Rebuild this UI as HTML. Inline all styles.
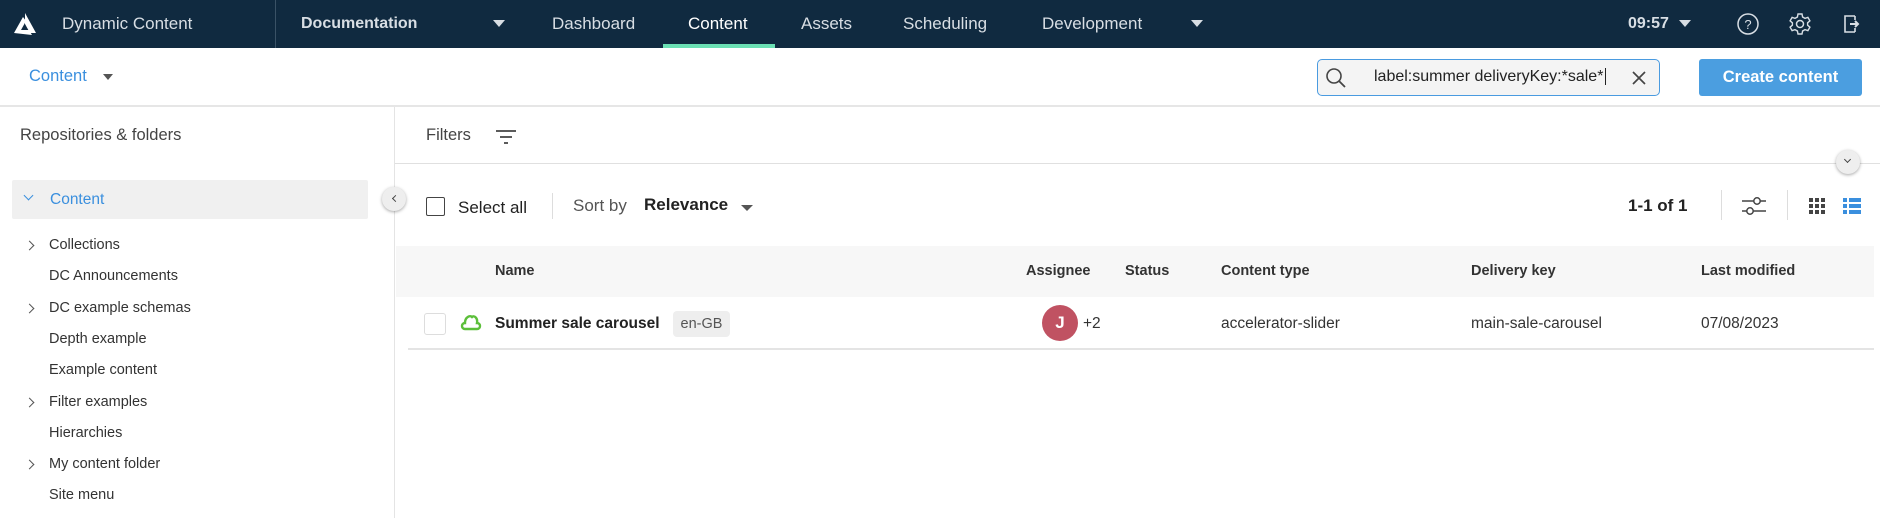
<!DOCTYPE html>
<html><head><meta charset="utf-8"><style>
*{margin:0;padding:0;box-sizing:border-box}
body{width:1880px;height:518px;overflow:hidden;background:#fff;font-family:"Liberation Sans",sans-serif;color:#333;position:relative}
.a{position:absolute;white-space:nowrap}
.nav{position:absolute;left:0;top:0;width:1880px;height:48px;background:#102a40}
.nt{position:absolute;top:14px;font-size:17px;color:#d8dee4}
.tri{position:absolute;width:0;height:0;border-left:6px solid transparent;border-right:6px solid transparent;border-top:7px solid #d8dee4}
.tree{position:absolute;left:49px;font-size:14.5px;color:#333}
.chev{position:absolute;left:26px;width:7px;height:7px;border-right:1.5px solid #555;border-top:1.5px solid #555;transform:rotate(45deg)}
.th{position:absolute;top:263px;font-size:14.5px;font-weight:bold;color:#333}
.td{position:absolute;top:315px;font-size:15.5px;color:#333}
</style></head><body>
<div class="nav">
 <svg class="a" style="left:13px;top:12px" width="24" height="24" viewBox="0 0 24 24"><path d="M12 1 L23 21 L17 21 L12 12 Z" fill="#fff"/><path d="M10 5 L1 21 L19 23 L16 18 L8 18 L13 9 Z" fill="#fff"/></svg>
 <div class="nt" style="left:62px">Dynamic Content</div>
 <div class="a" style="left:275px;top:0;width:1px;height:48px;background:#3a5266"></div>
 <div class="nt" style="left:301px;top:15px;font-weight:bold;font-size:16px">Documentation</div>
 <div class="tri" style="left:493px;top:20px"></div>
 <div class="nt" style="left:552px">Dashboard</div>
 <div class="nt" style="left:688px;color:#fff">Content</div>
 <div class="a" style="left:663px;top:44px;width:112px;height:4px;background:#6be0b4"></div>
 <div class="nt" style="left:801px">Assets</div>
 <div class="nt" style="left:903px">Scheduling</div>
 <div class="nt" style="left:1042px">Development</div>
 <div class="tri" style="left:1191px;top:20px"></div>
 <div class="nt" style="left:1628px;top:15px;font-weight:bold;font-size:16px">09:57</div>
 <div class="tri" style="left:1679px;top:20px"></div>
 <svg class="a" style="left:1736px;top:12px" width="24" height="24" viewBox="0 0 24 24"><circle cx="12" cy="12" r="10" fill="none" stroke="#d8dee4" stroke-width="1.5"/><text x="12" y="17" text-anchor="middle" font-size="13" fill="#d8dee4" font-family="Liberation Sans">?</text></svg>
 <svg class="a" style="left:1788px;top:12px" width="24" height="24" viewBox="0 0 24 24"><circle cx="12" cy="12" r="3.5" fill="none" stroke="#d8dee4" stroke-width="1.5"/><path d="M10 2h4l.6 3 2.4 1.4 2.9-1 2 3.4-2.3 2v2.4l2.3 2-2 3.4-2.9-1-2.4 1.4-.6 3h-4l-.6-3-2.4-1.4-2.9 1-2-3.4 2.3-2V10.8l-2.3-2 2-3.4 2.9 1L9.4 5z" fill="none" stroke="#d8dee4" stroke-width="1.4"/></svg>
 <svg class="a" style="left:1840px;top:12px" width="24" height="24" viewBox="0 0 24 24"><path d="M15 4H5v16h10M15 4v4M15 20v-4" fill="none" stroke="#d8dee4" stroke-width="1.6"/><path d="M10 12h8M15 9l3 3-3 3" fill="none" stroke="#d8dee4" stroke-width="2"/></svg>
</div>
<div class="a" style="left:29px;top:67px;font-size:16.5px;color:#3a8fde">Content</div>
<div class="tri" style="left:103px;top:74px;border-top-color:#555;border-width:6px 5px 0 5px"></div>
<div class="a" style="left:1317px;top:59px;width:343px;height:37px;border:1.5px solid #4a9be0;border-radius:5px;background:#f4f4f4"></div>
<svg class="a" style="left:1324px;top:66px" width="24" height="24" viewBox="0 0 24 24"><circle cx="10" cy="10" r="7" fill="none" stroke="#444" stroke-width="1.6"/><path d="M15 15l6 6" stroke="#444" stroke-width="1.8"/></svg>
<div class="a" style="left:1374px;top:68px;font-size:16px;color:#222">label:summer deliveryKey:*sale*<span style="border-left:1.5px solid #222;margin-left:2px"> </span></div>
<svg class="a" style="left:1630px;top:69px" width="18" height="18" viewBox="0 0 18 18"><path d="M3 3l12 12M15 3L3 15" stroke="#444" stroke-width="1.7"/></svg>
<div class="a" style="left:1699px;top:59px;width:163px;height:37px;background:#4b9ee0;border-radius:3px;color:#fff;font-size:16.5px;font-weight:bold;text-align:center;line-height:37px">Create content</div>
<div class="a" style="left:0;top:105px;width:1880px;height:2px;background:#e6e6e6"></div>
<div class="a" style="left:394px;top:107px;width:1px;height:411px;background:#e4e4e4"></div>
<div class="a" style="left:20px;top:126px;font-size:16.5px;color:#444">Repositories &amp; folders</div>
<div class="a" style="left:12px;top:180px;width:356px;height:39px;background:#f0f0f0;border-radius:2px"></div>
<div class="a" style="left:25px;top:192px;width:7px;height:7px;border-right:1.5px solid #3a8fde;border-bottom:1.5px solid #3a8fde;transform:rotate(45deg)"></div>
<div class="a" style="left:50px;top:191px;font-size:15.5px;color:#3a8fde">Content</div>
<div class="a" style="left:382px;top:187px;width:24px;height:24px;border-radius:50%;background:#eee;box-shadow:0 1px 3px rgba(0,0,0,.35)"></div>
<div class="a" style="left:393px;top:196px;width:5px;height:5px;border-left:1.4px solid #444;border-bottom:1.4px solid #444;transform:rotate(45deg)"></div>
<div class="chev" style="top:242px"></div><div class="tree" style="top:237px">Collections</div>
<div class="tree" style="top:268px">DC Announcements</div>
<div class="chev" style="top:305px"></div><div class="tree" style="top:300px">DC example schemas</div>
<div class="tree" style="top:331px">Depth example</div>
<div class="tree" style="top:362px">Example content</div>
<div class="chev" style="top:399px"></div><div class="tree" style="top:394px">Filter examples</div>
<div class="tree" style="top:425px">Hierarchies</div>
<div class="chev" style="top:461px"></div><div class="tree" style="top:456px">My content folder</div>
<div class="tree" style="top:487px">Site menu</div>
<div class="a" style="left:426px;top:126px;font-size:16.5px;color:#444">Filters</div>
<svg class="a" style="left:494px;top:125px" width="24" height="24" viewBox="0 0 24 24"><path d="M2 6h20M6 12h12M10 18h4" stroke="#444" stroke-width="1.8"/></svg>
<div class="a" style="left:395px;top:163px;width:1485px;height:1px;background:#e0e0e0"></div>
<div class="a" style="left:1836px;top:150px;width:24px;height:24px;border-radius:50%;background:#eee;box-shadow:0 1px 3px rgba(0,0,0,.35)"></div>
<div class="a" style="left:1845px;top:157px;width:5px;height:5px;border-right:1.4px solid #444;border-bottom:1.4px solid #444;transform:rotate(45deg)"></div>
<div class="a" style="left:426px;top:197px;width:19px;height:19px;border:1.8px solid #444;border-radius:2px"></div>
<div class="a" style="left:458px;top:198px;font-size:17px;color:#222">Select all</div>
<div class="a" style="left:552px;top:193px;width:1px;height:26px;background:#ddd"></div>
<div class="a" style="left:573px;top:196px;font-size:17px;color:#555">Sort by</div>
<div class="a" style="left:644px;top:195px;font-size:17px;color:#222;font-weight:bold">Relevance</div>
<div class="tri" style="left:741px;top:205px;border-top-color:#555;border-width:6px 6px 0 6px"></div>
<div class="a" style="left:1628px;top:196px;font-size:17px;color:#222;font-weight:bold">1-1 of 1</div>
<div class="a" style="left:1721px;top:190px;width:1px;height:30px;background:#ddd"></div>
<svg class="a" style="left:1740px;top:193px" width="28" height="26" viewBox="0 0 28 26"><path d="M2 8h24M2 18h24" stroke="#444" stroke-width="1.5"/><circle cx="17" cy="8" r="3.2" fill="#fff" stroke="#444" stroke-width="1.5"/><circle cx="10" cy="18" r="3.2" fill="#fff" stroke="#444" stroke-width="1.5"/></svg>
<div class="a" style="left:1787px;top:190px;width:1px;height:30px;background:#ddd"></div>
<svg class="a" style="left:1808px;top:197px" width="18" height="18" viewBox="0 0 18 18" fill="#444"><rect x="1" y="1" width="4" height="4"/><rect x="7" y="1" width="4" height="4"/><rect x="13" y="1" width="4" height="4"/><rect x="1" y="7" width="4" height="4"/><rect x="7" y="7" width="4" height="4"/><rect x="13" y="7" width="4" height="4"/><rect x="1" y="13" width="4" height="4"/><rect x="7" y="13" width="4" height="4"/><rect x="13" y="13" width="4" height="4"/></svg>
<svg class="a" style="left:1843px;top:197px" width="18" height="18" viewBox="0 0 18 18" fill="#3a8fde"><rect x="0" y="1" width="4" height="4"/><rect x="6" y="1" width="12" height="4"/><rect x="0" y="7" width="4" height="4"/><rect x="6" y="7" width="12" height="4"/><rect x="0" y="13" width="4" height="4"/><rect x="6" y="13" width="12" height="4"/></svg>
<div class="a" style="left:396px;top:246px;width:1478px;height:51px;background:#f7f7f7"></div>
<div class="th" style="left:495px">Name</div>
<div class="th" style="left:1026px">Assignee</div>
<div class="th" style="left:1125px">Status</div>
<div class="th" style="left:1221px">Content type</div>
<div class="th" style="left:1471px">Delivery key</div>
<div class="th" style="left:1701px">Last modified</div>
<div class="a" style="left:424px;top:313px;width:22px;height:22px;border:1.5px solid #ddd;border-radius:3px"></div>
<svg class="a" style="left:460px;top:313px" width="22" height="20" viewBox="0 0 22 20"><path d="M5 16 C1 16 1 10 5 10 C5 4 10 2 12 4 C14 2 18 5 17 10 C21 10 21 16 17 16 Z" fill="none" stroke="#5cbf3a" stroke-width="2.4"/></svg>
<div class="td" style="left:495px;font-weight:bold;color:#222">Summer sale carousel</div>
<div class="a" style="left:673px;top:311px;width:57px;height:26px;background:#eee;border-radius:4px;font-size:14.5px;color:#555;text-align:center;line-height:26px">en-GB</div>
<div class="a" style="left:1042px;top:305px;width:36px;height:36px;border-radius:50%;background:#c05262;color:#fff;font-weight:bold;font-size:17px;text-align:center;line-height:36px">J</div>
<div class="td" style="left:1083px">+2</div>
<div class="td" style="left:1221px">accelerator-slider</div>
<div class="td" style="left:1471px">main-sale-carousel</div>
<div class="td" style="left:1701px">07/08/2023</div>
<div class="a" style="left:408px;top:348px;width:1466px;height:2px;background:#e4e4e4"></div>
</body></html>
